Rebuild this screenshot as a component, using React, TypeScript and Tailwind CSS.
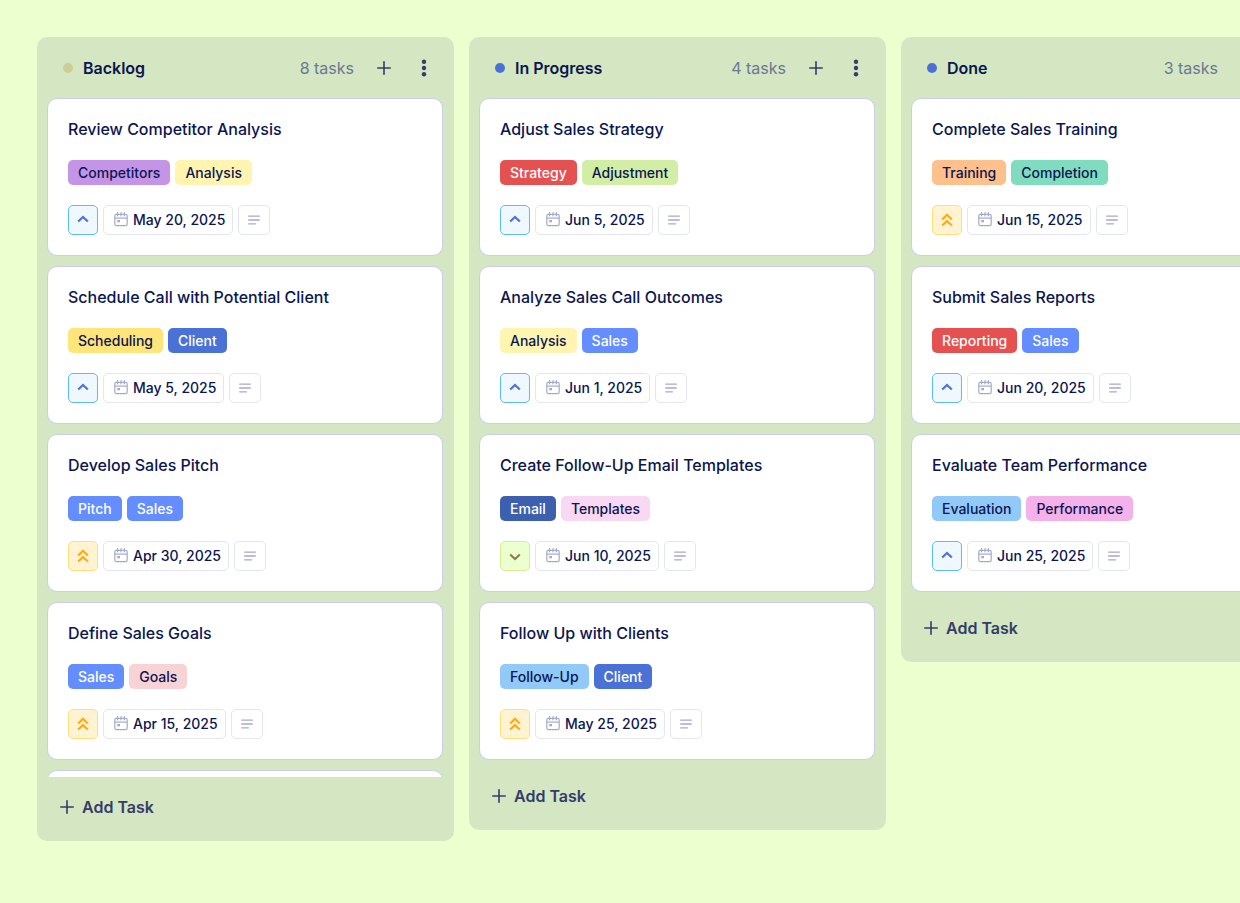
type Priority = "low" | "medium" | "high";

type Tag = { label: string; color: string };

type Task = {
  title: string;
  tags: Tag[];
  priority: Priority;
  date: string;
};

type Column = {
  name: string;
  dot: string;
  count: number;
  tasks: Task[];
};

const SALES: Tag = { label: "Sales", color: "bg-[#648eff] text-white" };
const CLIENT: Tag = { label: "Client", color: "bg-[#4a72d6] text-white" };
const ANALYSIS: Tag = { label: "Analysis", color: "bg-[#fff5b1]" };

const columns: Column[] = [
  {
    name: "Backlog",
    dot: "bg-[#cbcf95]",
    count: 8,
    tasks: [
      {
        title: "Review Competitor Analysis",
        tags: [{ label: "Competitors", color: "bg-[#c495e6]" }, ANALYSIS],
        priority: "medium",
        date: "May 20, 2025",
      },
      {
        title: "Schedule Call with Potential Client",
        tags: [{ label: "Scheduling", color: "bg-[#ffe57a]" }, CLIENT],
        priority: "medium",
        date: "May 5, 2025",
      },
      {
        title: "Develop Sales Pitch",
        tags: [{ label: "Pitch", color: "bg-[#648eff] text-white" }, SALES],
        priority: "high",
        date: "Apr 30, 2025",
      },
      {
        title: "Define Sales Goals",
        tags: [SALES, { label: "Goals", color: "bg-[#f8d3d5]" }],
        priority: "high",
        date: "Apr 15, 2025",
      },
    ],
  },
  {
    name: "In Progress",
    dot: "bg-[#4a72d6]",
    count: 4,
    tasks: [
      {
        title: "Adjust Sales Strategy",
        tags: [
          { label: "Strategy", color: "bg-[#e55151] text-white" },
          { label: "Adjustment", color: "bg-[#d2eea5]" },
        ],
        priority: "medium",
        date: "Jun 5, 2025",
      },
      {
        title: "Analyze Sales Call Outcomes",
        tags: [ANALYSIS, SALES],
        priority: "medium",
        date: "Jun 1, 2025",
      },
      {
        title: "Create Follow-Up Email Templates",
        tags: [
          { label: "Email", color: "bg-[#3c5fae] text-white" },
          { label: "Templates", color: "bg-[#f9d8f4]" },
        ],
        priority: "low",
        date: "Jun 10, 2025",
      },
      {
        title: "Follow Up with Clients",
        tags: [{ label: "Follow-Up", color: "bg-[#91c9f9]" }, CLIENT],
        priority: "high",
        date: "May 25, 2025",
      },
    ],
  },
  {
    name: "Done",
    dot: "bg-[#4a72d6]",
    count: 3,
    tasks: [
      {
        title: "Complete Sales Training",
        tags: [
          { label: "Training", color: "bg-[#ffc18c]" },
          { label: "Completion", color: "bg-[#80dcbe]" },
        ],
        priority: "high",
        date: "Jun 15, 2025",
      },
      {
        title: "Submit Sales Reports",
        tags: [{ label: "Reporting", color: "bg-[#e55151] text-white" }, SALES],
        priority: "medium",
        date: "Jun 20, 2025",
      },
      {
        title: "Evaluate Team Performance",
        tags: [
          { label: "Evaluation", color: "bg-[#91c9f9]" },
          { label: "Performance", color: "bg-[#f5b1e9]" },
        ],
        priority: "medium",
        date: "Jun 25, 2025",
      },
    ],
  },
];

const priorityStyles: Record<Priority, string> = {
  low: "border-[#d9ec8f] bg-[#ecffcf] text-[#917a50]",
  medium: "border-[#5bbcf7] bg-[#eff7ff] text-[#4a72d6]",
  high: "border-[#ffdf7c] bg-[#fff3d1] text-[#ffab10]",
};

const priorityPaths: Record<Priority, string> = {
  low: "M3.2 6.4 8 11l4.8-4.6",
  medium: "M3.2 9.6 8 5l4.8 4.6",
  high: "M3.2 7.4 8 2.8l4.8 4.6M3.2 13.6 8 9l4.8 4.6",
};

export default function App() {
  return (
    <main className="flex h-screen items-start gap-[15px] overflow-hidden bg-[#ecffcf] pt-[37px] pb-[62px] pl-[37px] font-['Inter',sans-serif] text-[#0a1551]">
      {columns.map((c) => (
        <BoardColumn key={c.name} column={c} />
      ))}
    </main>
  );
}

function BoardColumn({ column }: { column: Column }) {
  return (
    <section className="flex max-h-full w-[417px] shrink-0 flex-col rounded-[10px] bg-[#d5e6c2]">
      <header className="flex h-[61px] shrink-0 items-center pr-[15px] pl-[26px]">
        <span className={`mr-2.5 size-2.5 rounded-full ${column.dot}`} />
        <h2 className="flex-1 text-base font-semibold">{column.name}</h2>
        <span className="mr-[15px] text-base text-[#6c7893]">{column.count} tasks</span>
        <button
          type="button"
          aria-label="Add task"
          className="mr-2.5 flex size-[30px] items-center justify-center text-[#343c6a]"
        >
          <PlusIcon />
        </button>
        <button
          type="button"
          aria-label="Column menu"
          className="flex size-[30px] items-center justify-center text-[#343c6a]"
        >
          <DotsIcon />
        </button>
      </header>

      <div className="flex min-h-0 flex-col gap-2.5 overflow-y-auto pr-[11px] pb-1.5 pl-2.5 [scrollbar-width:none]">
        {column.tasks.map((t) => (
          <TaskCard key={t.title} task={t} />
        ))}
        {/* next card, still below the fold of the list */}
        {column.count > column.tasks.length && (
          <div className="h-40 shrink-0 rounded-[10px] border border-[#c8ceed] bg-white" />
        )}
      </div>

      <button
        type="button"
        className="flex h-16 shrink-0 items-center gap-2 pb-1 pl-[23px] text-base font-semibold text-[#343c6a]"
      >
        <PlusIcon />
        Add Task
      </button>
    </section>
  );
}

function TaskCard({ task }: { task: Task }) {
  return (
    <article className="flex shrink-0 flex-col gap-5 rounded-[10px] border border-[#c8ceed] bg-white p-5">
      <h3 className="text-base leading-[21px] font-medium">{task.title}</h3>

      <ul className="flex gap-[5px]">
        {task.tags.map((tag) => (
          <li
            key={tag.label}
            className={`flex h-[25px] items-center rounded-[5px] px-2.5 text-sm font-medium ${tag.color}`}
          >
            {tag.label}
          </li>
        ))}
      </ul>

      <div className="flex gap-[5px]">
        <button
          type="button"
          aria-label={`Priority ${task.priority}`}
          className={`flex size-[30px] items-center justify-center rounded-[5px] border ${priorityStyles[task.priority]}`}
        >
          <svg className="size-4" viewBox="0 0 16 16" fill="none" stroke="currentColor" strokeWidth="2.1">
            <path d={priorityPaths[task.priority]} />
          </svg>
        </button>
        <button
          type="button"
          className="flex h-[30px] items-center gap-[5px] rounded-[5px] border border-[#e3e5f5] pr-[7px] pl-2.5 text-sm font-medium"
        >
          <CalendarIcon />
          {task.date}
        </button>
        <button
          type="button"
          aria-label="Description"
          className="flex h-[30px] w-8 items-center justify-center rounded-[5px] border border-[#e3e5f5] text-[#a5a9cf]"
        >
          <LinesIcon />
        </button>
      </div>
    </article>
  );
}

/* ---------- icons ---------- */

function PlusIcon() {
  return (
    <svg
      className="size-3.5"
      viewBox="0 0 14 14"
      fill="none"
      stroke="currentColor"
      strokeWidth="1.6"
      strokeLinecap="round"
    >
      <path d="M7 .8v12.4M.8 7h12.4" />
    </svg>
  );
}

function DotsIcon() {
  return (
    <svg className="h-[18px] w-1.5" viewBox="0 0 6 18" fill="currentColor">
      <circle cx="3" cy="2.7" r="2.2" />
      <circle cx="3" cy="9" r="2.2" />
      <circle cx="3" cy="15.3" r="2.2" />
    </svg>
  );
}

function CalendarIcon() {
  return (
    <svg
      className="h-4 w-3.5 text-[#a5a9cf]"
      viewBox="0 0 14 16"
      fill="none"
      stroke="currentColor"
      strokeWidth="1.2"
    >
      <rect x=".8" y="2.4" width="12.4" height="11.2" rx="1.6" />
      <path d="M.8 6.1h12.4" />
      <path d="M3.6.6v3.2M7 .6v3.2M10.4.6v3.2" strokeLinecap="round" />
      <rect x="3.2" y="7.9" width="2.8" height="2.4" rx=".4" fill="currentColor" stroke="none" />
    </svg>
  );
}

function LinesIcon() {
  return (
    <svg
      className="h-2.5 w-3"
      viewBox="0 0 12 10"
      fill="none"
      stroke="currentColor"
      strokeWidth="1.3"
      strokeLinecap="round"
    >
      <path d="M.7 1.2h10.6M.7 5h10.6M.7 8.8h6.8" />
    </svg>
  );
}
